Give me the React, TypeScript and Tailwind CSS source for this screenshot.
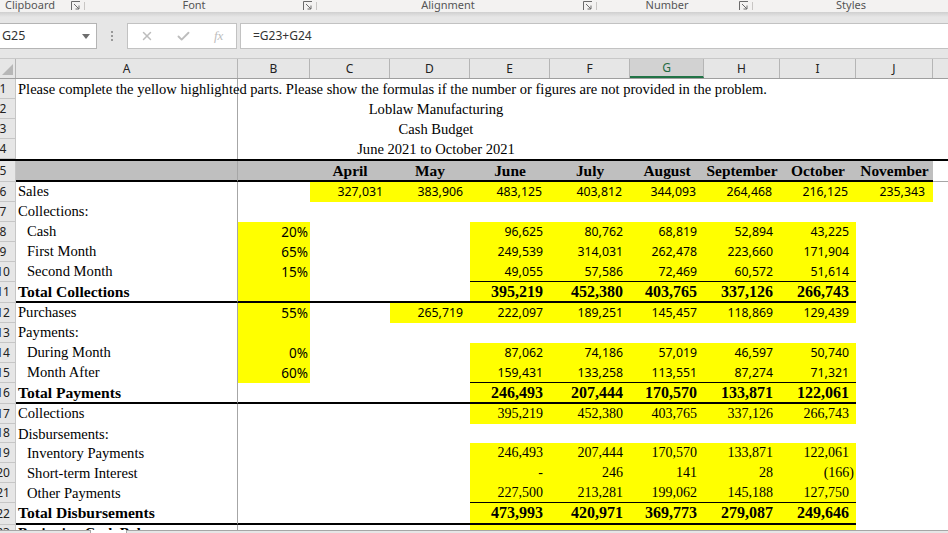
import { Check, X } from 'lucide-react';

const GRID = 'grid grid-cols-[16px_222px_72px_80px_80px_80px_80px_74px_76px_76px_77px_1fr]';
const serif = "font-['Liberation_Serif',serif]";
const tahoma = "font-['Noto_Sans',sans-serif]";

type Row = {
  n: number;
  h: string;
  label?: string;
  indent?: boolean;
  bold?: boolean;
  pct?: string;
  pctFill?: boolean;
  vals?: string[];
  sales?: boolean;
  purchase?: boolean;
  line?: string;
  thin?: boolean;
  soft?: boolean;
};

const rows: Row[] = [
  { n: 6, h: 'h-[20px]', label: 'Sales', sales: true },
  { n: 7, h: 'h-[20px]', label: 'Collections:' },
  { n: 8, h: 'h-[20px]', label: 'Cash', indent: true, pct: '20%', vals: ['96,625', '80,762', '68,819', '52,894', '43,225'] },
  { n: 9, h: 'h-[20px]', label: 'First Month', indent: true, pct: '65%', vals: ['249,539', '314,031', '262,478', '223,660', '171,904'] },
  { n: 10, h: 'h-[20px]', label: 'Second Month', indent: true, pct: '15%', vals: ['49,055', '57,586', '72,469', '60,572', '51,614'], thin: true },
  { n: 11, h: 'h-[21px]', label: 'Total Collections', bold: true, pctFill: true, vals: ['395,219', '452,380', '403,765', '337,126', '266,743'], line: 'thick' },
  { n: 12, h: 'h-[20px]', label: 'Purchases', pct: '55%', purchase: true, vals: ['222,097', '189,251', '145,457', '118,869', '129,439'] },
  { n: 13, h: 'h-[20px]', label: 'Payments:', pctFill: true },
  { n: 14, h: 'h-[20px]', label: 'During Month', indent: true, pct: '0%', vals: ['87,062', '74,186', '57,019', '46,597', '50,740'] },
  { n: 15, h: 'h-[20px]', label: 'Month After', indent: true, pct: '60%', vals: ['159,431', '133,258', '113,551', '87,274', '71,321'], thin: true },
  { n: 16, h: 'h-[21px]', label: 'Total Payments', bold: true, vals: ['246,493', '207,444', '170,570', '133,871', '122,061'], line: 'thick' },
  { n: 17, h: 'h-[20px]', label: 'Collections', soft: true, vals: ['395,219', '452,380', '403,765', '337,126', '266,743'] },
  { n: 18, h: 'h-[19px]', label: 'Disbursements:' },
  { n: 19, h: 'h-[20px]', label: 'Inventory Payments', indent: true, soft: true, vals: ['246,493', '207,444', '170,570', '133,871', '122,061'] },
  { n: 20, h: 'h-[20px]', label: 'Short-term Interest', indent: true, soft: true, vals: ['-', '246', '141', '28', '(166)'] },
  { n: 21, h: 'h-[20px]', label: 'Other Payments', indent: true, soft: true, vals: ['227,500', '213,281', '199,062', '145,188', '127,750'], thin: true },
  { n: 22, h: 'h-[22px]', label: 'Total Disbursements', bold: true, vals: ['473,993', '420,971', '369,773', '279,087', '249,646'], line: 'thick' },
];

const columns = ['A', 'B', 'C', 'D', 'E', 'F', 'G', 'H', 'I', 'J'];
const months = ['April', 'May', 'June', 'July', 'August', 'September', 'October', 'November'];

function RowNum({ n }: { n: number }) {
  return (
    <div className={`${tahoma} flex items-center overflow-hidden border-b border-r border-[#c6c6c6] bg-[#e6e6e6] text-[12px] text-[#222]`}>
      {/* the header is scrolled a bit, long numbers get cut on the left */}
      <span className="flex w-[6px] justify-center">{n}</span>
    </div>
  );
}

function Launcher() {
  return (
    <svg width="10" height="10" viewBox="0 0 10 10" fill="none" stroke="#6b6b6b" strokeWidth="1">
      <path d="M0.5 9V0.5H9" />
      <path d="M3 3L8 8M8 4.5V8H4.5" />
    </svg>
  );
}

function GroupLabel({ className, text, launcher = true }: { className: string; text: string; launcher?: boolean }) {
  return (
    <div className={`${className} relative flex h-full justify-center`}>
      <span className="text-[11px] leading-[10px] text-[#555]">{text}</span>
      {launcher && (
        <div className="absolute right-[1px] top-0 flex h-full items-center gap-[3px]">
          <Launcher />
          <div className="h-[8px] w-px bg-[#c8c6c4]" />
        </div>
      )}
    </div>
  );
}

function DataRow({ row }: { row: Row }) {
  const border = row.line === 'thick' ? 'border-b-2 border-black' : row.thin ? 'border-b border-black' : '';
  const text = row.bold ? `${serif} text-[16px] font-bold` : row.soft ? `${serif} text-[14px]` : `${tahoma} text-[12.3px]`;
  const thick = row.line === 'thick' ? border : '';
  return (
    <div className={`${GRID} ${row.h}`}>
      <RowNum n={row.n} />
      <div className={`${serif} ${thick} flex items-center whitespace-nowrap border-r border-r-[#a6a6a6] ${row.indent ? 'pl-[11px]' : 'pl-[2px]'} ${row.bold ? 'text-[15.6px] font-bold' : 'text-[14.6px]'} ${!row.bold && row.n < 18 ? 'pb-[2px]' : ''}`}>
        {row.label}
      </div>
      <div className={`${tahoma} flex items-center justify-end pr-[2px] text-[13.5px] ${thick} ${row.pct || row.pctFill ? 'bg-[#ffff00]' : ''}`}>
        {row.pct}
      </div>
      <div className={`${tahoma} flex items-center justify-end pr-[7px] text-[12.3px] ${thick} ${row.sales ? 'bg-[#ffff00]' : ''}`}>
        {row.sales && '327,031'}
      </div>
      <div className={`${tahoma} flex items-center justify-end pr-[7px] text-[12.3px] ${thick} ${row.sales || row.purchase ? 'bg-[#ffff00]' : ''}`}>
        {row.sales && '383,906'}
        {row.purchase && '265,719'}
      </div>
      {row.sales
        ? ['483,125', '403,812', '344,093', '264,468', '216,125', '235,343'].map((v) => (
            <div key={v} className={`${tahoma} flex items-center justify-end bg-[#ffff00] pr-[8px] text-[12.3px]`}>
              {v}
            </div>
          ))
        : [0, 1, 2, 3, 4].map((i) => (
            <div key={i} className={`flex items-center justify-end ${text} ${border} ${row.vals ? 'bg-[#ffff00]' : ''} ${row.vals?.[i] === '(166)' ? 'pr-[2px]' : 'pr-[7px]'}`}>
              {row.vals?.[i]}
            </div>
          ))}
    </div>
  );
}

export default function App() {
  return (
    <div className="relative h-[533px] w-[948px] overflow-hidden bg-white font-['Noto_Sans',sans-serif] text-black">
      {/* Ribbon group names */}
      <div className="flex h-[12px] overflow-hidden bg-[#f3f2f1]">
        <GroupLabel className="w-[86px] pr-[26px]" text="Clipboard" />
        <GroupLabel className="w-[232px] pr-[16px]" text="Font" />
        <GroupLabel className="w-[280px] pr-[20px]" text="Alignment" />
        <GroupLabel className="w-[156px] pr-[18px]" text="Number" />
        <GroupLabel className="flex-1" text="Styles" launcher={false} />
      </div>

      {/* Formula bar */}
      <div className="flex h-[47px] items-start border-b border-[#c8c8c8] bg-[linear-gradient(#cfcfcf,#e6e6e6_5px)] pt-[11px]">
        <div className="flex h-[26px] w-[97px] items-center justify-between border border-l-0 border-[#b4b4b4] bg-white pl-[2px] pr-[6px] text-[12.5px] text-[#333]">
          G25
          <svg width="8" height="5" viewBox="0 0 8 5"><path d="M0 0H8L4 5Z" fill="#6e6e6e" /></svg>
        </div>
        <div className="flex h-[26px] w-[30px] flex-col items-center justify-center gap-[2px]">
          <span className="h-[2px] w-[2px] bg-[#999]" />
          <span className="h-[2px] w-[2px] bg-[#999]" />
          <span className="h-[2px] w-[2px] bg-[#999]" />
        </div>
        <div className="flex h-[26px] w-[110px] items-center border border-[#c2c2c2] bg-white pl-[12px] text-[#bdbdbd]">
          <X size={14} strokeWidth={2.5} />
          <Check size={15} strokeWidth={3} className="ml-[22px]" />
          <span className={`${serif} ml-[23px] text-[13px] italic`}>fx</span>
        </div>
        <div className="ml-[3px] flex h-[26px] flex-1 items-center border-y border-l border-[#c2c2c2] bg-white pl-[12px] text-[12px] text-[#333]">
          =G23+G24
        </div>
      </div>

      {/* Column headers */}
      <div className={`${GRID} ${tahoma} h-[20px] border-b border-[#9f9f9f] text-[12px] leading-[16px] text-[#222]`}>
        <div className="relative border-r border-[#b5b5b5] bg-[#e6e6e6]">
          <svg className="absolute right-[2px] bottom-[3px]" width="11" height="11" viewBox="0 0 11 11"><path d="M11 0V11H0Z" fill="#b7b7b7" /></svg>
        </div>
        {columns.map((c) => (
          <div
            key={c}
            className={`flex items-center justify-center border-r border-[#b5b5b5] ${c === 'G' ? 'border-b-2 border-b-[#217346] bg-[#d2d2d2] text-[#1f6b42]' : 'bg-[#e6e6e6]'}`}
          >
            {c}
          </div>
        ))}
        <div className="bg-[#e6e6e6]" />
      </div>

      {/* Sheet */}
      <div className={`${serif} text-[14.55px] leading-[16px]`}>
        <div className={`${GRID} h-[20px]`}>
          <RowNum n={1} />
          <div className="flex items-center whitespace-nowrap border-r border-r-[#a6a6a6] pl-[2px]">
            Please complete the yellow highlighted parts. Please show the formulas if the number or figures are not provided in the problem.
          </div>
        </div>
        {['Loblaw Manufacturing', 'Cash Budget', 'June 2021 to October 2021'].map((t, i) => (
          <div key={t} className={`${GRID} ${i === 2 ? 'h-[22px] border-b-2 border-black' : 'h-[20px]'}`}>
            <RowNum n={i + 2} />
            <div className="border-r border-r-[#a6a6a6]" />
            <div className="col-span-5 flex items-center justify-center whitespace-nowrap pl-[4px]">{t}</div>
          </div>
        ))}
        <div className={`${GRID} h-[21px]`}>
          <RowNum n={5} />
          <div className="border-r border-b-2 border-r-[#a6a6a6] border-b-black bg-[#bfbfbf]" />
          <div className="border-b-2 border-black bg-[#bfbfbf]" />
          {months.map((m) => (
            <div key={m} className="flex items-center justify-center whitespace-nowrap border-b-2 border-black bg-[#bfbfbf] text-[15.4px] font-bold">
              {m}
            </div>
          ))}
          <div className="border-b border-[#a6a6a6]" />
        </div>
        {rows.map((r) => (
          <DataRow key={r.n} row={r} />
        ))}
        <div className={`${GRID} h-[9px] overflow-hidden`}>
          <RowNum n={23} />
          <div className="whitespace-nowrap border-r border-r-[#a6a6a6] pl-[2px] font-bold leading-[17px]">Beginning Cash Balance</div>
          <div className="col-span-3" />
          <div className="col-span-5 bg-[#ffff00]" />
        </div>
      </div>

      {/* Sheet tab strip, mostly below the crop */}
      <div className="absolute inset-x-0 bottom-0 flex h-[3px] border-t border-[#a6a6a6] bg-[#e6e6e6]">
        <div className="-mt-px ml-[90px] h-[4px] w-[37px] border-x border-[#a6a6a6] bg-white" />
      </div>
    </div>
  );
}
